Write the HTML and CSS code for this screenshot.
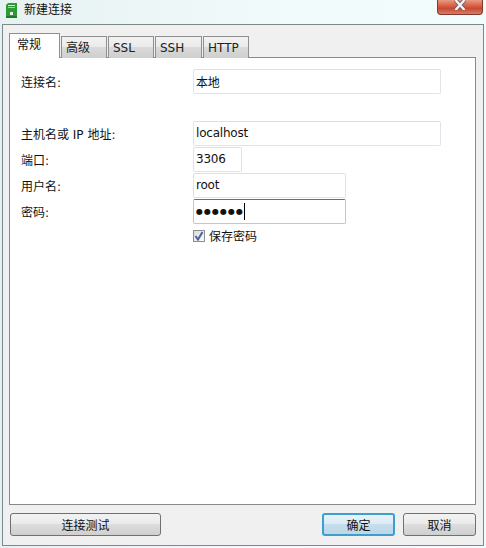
FILE: index.html
```html
<!DOCTYPE html>
<html lang="zh-CN">

<head>
    <meta charset="UTF-8">
    <title>新建连接</title>
    <link rel="stylesheet" href="styles.css">
</head>

<body>
    <div class="window">
        <div class="title-bar">
            <svg class="app-icon" width="11" height="15" viewBox="0 0 11 15">
                <path d="M0 2 L2 0 H11 V15 H0 Z" fill="#2f9a35" />
                <path d="M2 2 H9 V3 H2 Z" fill="#d6efd2" />
                <path d="M2 4 H9 V5 H2 Z" fill="#9ed69a" />
                <path d="M4 9 H7 V12 H4 Z" fill="#e8f6e4" />
                <path d="M0 13 H11 V15 H0 Z" fill="#1d7a26" />
            </svg>
            <span class="title-text">新建连接</span>
            <div class="close-button">
                <svg width="12" height="10" viewBox="0 0 12 10">
                    <path d="M1.5 0 L10.5 10 M10.5 0 L1.5 10" fill="none" stroke="#5a5f68" stroke-width="4" />
                    <path d="M1.5 0 L10.5 10 M10.5 0 L1.5 10" fill="none" stroke="#f4f4f6" stroke-width="2.4" />
                </svg>
            </div>
        </div>

        <div class="frame">
            <div class="tabs">
                <div class="tab active">常规</div>
                <div class="tab">高级</div>
                <div class="tab">SSL</div>
                <div class="tab tab-ssh">SSH</div>
                <div class="tab">HTTP</div>
            </div>

            <div class="panel">
                <div class="row row-name">
                    <label class="row-label">连接名:</label>
                    <div class="field field-long">本地</div>
                </div>
                <div class="row">
                    <label class="row-label">主机名或 IP 地址:</label>
                    <div class="field field-long">localhost</div>
                </div>
                <div class="row">
                    <label class="row-label">端口:</label>
                    <div class="field field-port">3306</div>
                </div>
                <div class="row">
                    <label class="row-label">用户名:</label>
                    <div class="field field-mid">root</div>
                </div>
                <div class="row">
                    <label class="row-label">密码:</label>
                    <div class="field field-mid field-focus"><span class="dots">●●●●●●</span><span class="caret"></span></div>
                </div>
                <div class="check-row">
                    <div class="check-box">
                        <svg width="10" height="10" viewBox="0 0 10 10">
                            <path d="M1.5 5 L4 8.5 L8.5 1" fill="none" stroke="#4a5fa5" stroke-width="2" />
                        </svg>
                    </div>
                    <span>保存密码</span>
                </div>
            </div>

            <div class="buttons">
                <button class="btn btn-test">连接测试</button>
                <div class="buttons-right">
                    <button class="btn btn-small btn-default">确定</button>
                    <button class="btn btn-small">取消</button>
                </div>
            </div>
        </div>
    </div>
</body>

</html>
```

FILE: styles.css
```css
* {
    box-sizing: border-box;
}

html,
body {
    margin: 0;
    height: 100%;
}

body {
    font-family: "DejaVu Sans", "Noto Sans CJK SC", sans-serif;
    font-size: 12px;
    color: #111;
    background: #eef7f8;
    overflow: hidden;
}

.window {
    height: 548px;
    padding: 0 2px 2px 2px;
    display: flex;
    flex-direction: column;
    background: linear-gradient(90deg, #e6f1f1, #f2fbfc 60%, #f2fcfd);
}

.title-bar {
    height: 24px;
    display: flex;
    align-items: flex-start;
    flex-shrink: 0;
}

.app-icon {
    margin: 3px 0 0 4px;
}

.title-text {
    margin: 2px 0 0 7px;
    font-size: 12px;
    line-height: 16px;
}

.close-button {
    margin-left: auto;
    margin-right: 1px;
    width: 46px;
    height: 15px;
    display: flex;
    align-items: flex-start;
    justify-content: center;
    border: 1px solid #7c3a30;
    border-top: none;
    border-radius: 0 0 4px 4px;
    background: linear-gradient(#e89a84, #d65a3e 45%, #c64a30 60%, #d8796a);
}

.frame {
    flex: 1;
    display: flex;
    flex-direction: column;
    padding: 8px 7px 0 6px;
    border: 1px solid #7d8a8a;
    background: #f0f0f0;
}

.tabs {
    display: flex;
    align-items: flex-end;
    height: 25px;
    gap: 1px;
    margin-bottom: -1px;
    position: relative;
    z-index: 1;
}

.tab {
    width: 46px;
    height: 22px;
    padding-left: 4px;
    border: 1px solid #8f8f8f;
    border-bottom: none;
    background: linear-gradient(#f2f2f2, #ebebeb 45%, #d9d9d9 50%, #cfcfcf);
    line-height: 22px;
    color: #222;
}

.tab.active {
    width: 51px;
    height: 25px;
    padding-left: 7px;
    background: #fff;
    line-height: 23px;
    color: #111;
}

.tab-ssh {
    width: 47px;
}

.panel {
    flex: 1;
    display: flex;
    flex-direction: column;
    padding: 10px 34px 0 11px;
    border: 1px solid #8a8a8a;
    background: #fff;
}

.row {
    display: flex;
    align-items: center;
    height: 26px;
    flex-shrink: 0;
}

.row-name {
    margin-bottom: 26px;
}

.row-label {
    width: 172px;
    flex-shrink: 0;
}

.field {
    height: 25px;
    display: flex;
    align-items: center;
    padding-left: 2px;
    letter-spacing: -0.2px;
    border: 1px solid #e2e3ea;
    border-top-color: #dcdfe6;
    border-radius: 2px;
    background: #fff;
}

.field-long {
    width: 248px;
}

.field-port {
    width: 49px;
}

.field-mid {
    width: 153px;
}

.field-focus {
    border-color: #a9cde2;
    border-top-color: #3d7bad;
}

.dots {
    font-size: 8px;
    letter-spacing: 1px;
}

.caret {
    width: 1px;
    height: 17px;
    background: #000;
}

.check-row {
    display: flex;
    align-items: center;
    gap: 4px;
    margin: 3px 0 0 172px;
}

.check-box {
    width: 12px;
    height: 12px;
    border: 1px solid #8e8f8f;
    display: flex;
    align-items: center;
    justify-content: center;
    background: linear-gradient(135deg, #dcdcdc, #fafafa);
}

.buttons {
    display: flex;
    justify-content: space-between;
    align-items: flex-start;
    padding: 8px 0 0 1px;
    height: 40px;
    flex-shrink: 0;
}

.buttons-right {
    display: flex;
    gap: 8px;
}

.btn {
    height: 23px;
    padding: 0;
    font-family: inherit;
    font-size: 12px;
    color: #111;
    border: 1px solid #707070;
    border-radius: 3px;
    background: linear-gradient(#f2f2f2, #ebebeb 45%, #dddddd 50%, #cfcfcf);
}

.btn-test {
    width: 151px;
}

.btn-small {
    width: 73px;
}

.btn-default {
    border: 2px solid #3c9fd0;
    background: linear-gradient(#e8f3f9, #dcebf4 45%, #c6deec 50%, #bdd7e7);
}
```
